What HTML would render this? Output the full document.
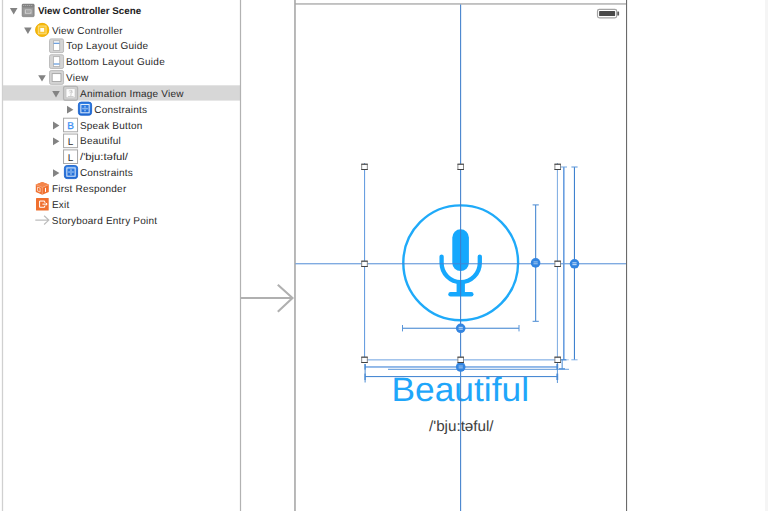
<!DOCTYPE html>
<html><head><meta charset="utf-8">
<title>Main.storyboard</title>
<style>
html,body{margin:0;padding:0;background:#fff;}
body{width:768px;height:511px;position:relative;overflow:hidden;font-family:"Liberation Sans",sans-serif;}
.a{position:absolute;}
</style></head><body>
<svg class="a" style="left:0;top:0" width="242" height="511" viewBox="0 0 242 511" font-family="Liberation Sans, sans-serif" text-rendering="geometricPrecision">
<defs><linearGradient id="cg" x1="0" y1="0" x2="0" y2="1"><stop offset="0" stop-color="#3481e5"/><stop offset="1" stop-color="#1e69d5"/></linearGradient></defs>
<rect x="1.7" y="0" width="0.6" height="511" fill="#e6e6e6"/><rect x="2.2" y="0" width="0.9" height="511" fill="#c6c6c6"/>
<rect x="3" y="85.3" width="237" height="15.3" fill="#d7d7d7"/>
<rect x="239.9" y="0" width="1.2" height="511" fill="#b2b2b2"/>
<polygon points="9.90,8.10 17.50,8.10 13.70,14.50" fill="#838383"/>
<rect x="22.10" y="4.10" width="12.10" height="12.60" fill="#909090" rx="1" stroke="#7c7c7c" stroke-width="0.6"/>
<rect x="22.10" y="4.10" width="12.10" height="3.20" fill="#828282" rx="1"/>
<path d="M23.15 5.50 h10" stroke="#b5b5b5" stroke-width="0.9" stroke-dasharray="1.1 0.9"/>
<rect x="23.25" y="7.80" width="9.80" height="7.60" fill="#9b9b9b" />
<rect x="24.85" y="9.50" width="6.60" height="4.20" fill="#d4d4d4" />
<rect x="26.05" y="10.70" width="4.20" height="1.80" fill="#a8a8a8" stroke="#8a8a8a" stroke-width="0.4"/>
<text x="37.9" y="14" font-size="9.8" font-weight="bold" fill="#1d1d1d">View Controller Scene</text>
<polygon points="24.10,27.60 31.70,27.60 27.90,34.00" fill="#838383"/>
<circle cx="42.2" cy="29.9" r="6.95" fill="#f6b90c"/>
<circle cx="42.2" cy="29.9" r="6.6" fill="none" stroke="#eaa800" stroke-width="0.7"/>
<rect x="38.30" y="26.00" width="7.80" height="7.80" fill="#f8c632" stroke="#fbe08a" stroke-width="0.9"/>
<rect x="40.30" y="28.00" width="3.80" height="3.80" fill="#fffdf5" />
<text x="51.9" y="34" font-size="10" letter-spacing="0.22" fill="#2a2a2a">View Controller</text>
<rect x="49.55" y="38.90" width="14.00" height="13.70" fill="#d4d4d4" rx="1.6" stroke="#bcbcbc" stroke-width="1"/>
<rect x="53.35" y="40.85" width="6.40" height="9.80" fill="#fff" stroke="#a6a6a6" stroke-width="0.7"/>
<rect x="53.65" y="42.75" width="5.80" height="1.00" fill="#3f83d6" />
<text x="66.3" y="49" font-size="10" letter-spacing="0.22" fill="#2a2a2a">Top Layout Guide</text>
<rect x="49.55" y="54.75" width="14.00" height="13.70" fill="#d4d4d4" rx="1.6" stroke="#bcbcbc" stroke-width="1"/>
<rect x="53.35" y="56.70" width="6.40" height="9.80" fill="#fff" stroke="#a6a6a6" stroke-width="0.7"/>
<rect x="53.65" y="63.50" width="5.80" height="1.00" fill="#3f83d6" />
<text x="65.9" y="65" font-size="10" letter-spacing="0.27" fill="#2a2a2a">Bottom Layout Guide</text>
<polygon points="38.20,75.15 45.80,75.15 42.00,81.55" fill="#838383"/>
<rect x="49.55" y="70.60" width="14.00" height="13.70" fill="#d4d4d4" rx="1.6" stroke="#bcbcbc" stroke-width="1"/>
<rect x="52.15" y="73.65" width="8.80" height="7.80" fill="#fff" stroke="#9c9c9c" stroke-width="0.8"/>
<text x="66.1" y="81" font-size="10" letter-spacing="0.22" fill="#2a2a2a">View</text>
<polygon points="52.20,91.00 59.80,91.00 56.00,97.40" fill="#838383"/>
<rect x="63.55" y="86.45" width="14.00" height="13.70" fill="#d4d4d4" rx="1.6" stroke="#bcbcbc" stroke-width="1"/>
<rect x="63.55" y="86.45" width="14.00" height="13.70" fill="#cfcfcf" rx="1.6" stroke="#b4b4b4" stroke-width="1.2"/>
<rect x="66.05" y="88.80" width="9.00" height="9.00" fill="#fcfcfc" stroke="#bdbdbd" stroke-width="0.6"/>
<path d="M71.55 90.30 l-0.8 6 M68.75 91.10 q2 -1.5 3.8 0 M69.55 92.90 q1.6 -2 3.4 -0.6 M67.95 96.50 h5.6" stroke="#c9c9c9" stroke-width="0.9" fill="none"/>
<text x="80.0" y="97" font-size="10" letter-spacing="0.22" fill="#2a2a2a">Animation Image View</text>
<polygon points="67.00,105.75 73.40,109.65 67.00,113.55" fill="#838383"/>
<rect x="78.40" y="102.10" width="13.20" height="13.10" fill="url(#cg)" rx="2.8" stroke="#1d62c8" stroke-width="0.9"/>
<rect x="80.85" y="104.50" width="8.30" height="8.30" fill="none" stroke="#e4eefb" stroke-width="1"/>
<path d="M85.00 105.75 v5.8 M82.10 108.65 h5.8" stroke="#8fbaf0" stroke-width="0.9"/>
<path d="M84.00 106.75 h2 M84.00 110.55 h2 M83.10 107.65 v2 M86.90 107.65 v2" stroke="#8fbaf0" stroke-width="0.7"/>
<text x="94.3" y="113" font-size="10" letter-spacing="0.22" fill="#2a2a2a">Constraints</text>
<polygon points="53.00,121.60 59.40,125.50 53.00,129.40" fill="#838383"/>
<rect x="63.55" y="118.20" width="14.00" height="13.60" fill="#fff" stroke="#a8a8a8" stroke-width="1"/>
<text x="70.65" y="129" text-anchor="middle" font-size="10" fill="#3b8ff5" stroke="#3b8ff5" stroke-width="0.3">B</text>
<text x="79.9" y="129" font-size="10" letter-spacing="0.22" fill="#2a2a2a">Speak Button</text>
<polygon points="53.00,137.45 59.40,141.35 53.00,145.25" fill="#838383"/>
<rect x="63.55" y="134.05" width="14.00" height="13.60" fill="#fff" stroke="#a8a8a8" stroke-width="1"/>
<text x="70.65" y="145" text-anchor="middle" font-size="10" fill="#2e2e2e" stroke="#2e2e2e" stroke-width="0">L</text>
<text x="80.0" y="144" font-size="10" letter-spacing="0.22" fill="#2a2a2a">Beautiful</text>
<rect x="63.55" y="149.90" width="14.00" height="13.60" fill="#fff" stroke="#a8a8a8" stroke-width="1"/>
<text x="70.65" y="161" text-anchor="middle" font-size="10" fill="#2e2e2e" stroke="#2e2e2e" stroke-width="0">L</text>
<text x="80.1" y="160" font-size="10" textLength="47.8" lengthAdjust="spacingAndGlyphs" fill="#2a2a2a">/'bju:təful/</text>
<polygon points="53.00,169.15 59.40,173.05 53.00,176.95" fill="#838383"/>
<rect x="64.40" y="165.50" width="13.20" height="13.10" fill="url(#cg)" rx="2.8" stroke="#1d62c8" stroke-width="0.9"/>
<rect x="66.85" y="167.90" width="8.30" height="8.30" fill="none" stroke="#e4eefb" stroke-width="1"/>
<path d="M71.00 169.15 v5.8 M68.10 172.05 h5.8" stroke="#8fbaf0" stroke-width="0.9"/>
<path d="M70.00 170.15 h2 M70.00 173.95 h2 M69.10 171.05 v2 M72.90 171.05 v2" stroke="#8fbaf0" stroke-width="0.7"/>
<text x="79.9" y="176" font-size="10" letter-spacing="0.22" fill="#2a2a2a">Constraints</text>
<g transform="translate(35.80,182.00)"><path d="M6.5 0 L13 2.6 L13 10 L6.5 12.8 L0 10 L0 2.6 Z" fill="#f0702f"/><path d="M6.5 0 L13 2.6 L6.5 5.4 L0 2.6 Z" fill="#f4854a"/><path d="M0 2.6 L6.5 5.4 L13 2.6 M6.5 5.4 L6.5 12.8" stroke="#f9b491" stroke-width="0.7" fill="none"/><rect x="1.7" y="5.6" width="2.6" height="3.8" fill="none" stroke="#fbd9c6" stroke-width="0.8" transform="skewY(22) translate(0,-1.2)"/><path d="M9.7 5.9 v4" stroke="#fff" stroke-width="1"/></g>
<text x="52.0" y="192" font-size="10" letter-spacing="0.22" fill="#2a2a2a">First Responder</text>
<g transform="translate(36.00,197.95)"><rect x="0" y="0" width="12.7" height="12.6" rx="0.6" fill="#f0702f"/><path d="M8.6 4.6 V3.1 H3.6 V9.3 H8.6 V7.8" stroke="#fff" stroke-width="1" fill="none"/><path d="M6.4 6.2 H11 M9.6 4.7 L11.2 6.2 L9.6 7.7" stroke="#fff" stroke-width="1" fill="none"/></g>
<text x="51.9" y="208" font-size="10" letter-spacing="0.22" fill="#2a2a2a">Exit</text>
<path d="M35.30 220.10 H48.50 M44.10 215.70 L48.80 220.10 L44.10 224.50" stroke="#bdbdbd" stroke-width="1.2" fill="none"/>
<text x="51.8" y="224" font-size="10" letter-spacing="0.22" fill="#2a2a2a">Storyboard Entry Point</text>
</svg>
<svg class="a" style="left:0;top:0" width="768" height="511" viewBox="0 0 768 511">
<!-- device frame -->
<rect x="294.25" y="0" width="1.45" height="511" fill="#9e9e9e"/>
<rect x="626" y="0" width="1.1" height="511" fill="#6a6a6a"/>
<rect x="295" y="3.3" width="331" height="1.3" fill="#a6a6a6"/>
<rect x="765" y="0" width="3" height="511" fill="#f5f5f5"/>
<!-- battery -->
<rect x="597.5" y="9.4" width="19.2" height="8.4" rx="1.8" fill="#fff" stroke="#a4a4a4" stroke-width="1.2"/>
<rect x="599.1" y="11.1" width="16" height="5" rx="0.6" fill="#4a4a4a"/>
<rect x="617.3" y="11.6" width="1.8" height="3.9" rx="0.5" fill="#5a5a5a"/>
<!-- entry arrow -->
<path d="M240.5 298 H292.5 M277.8 284.8 L292.5 298 L277.8 311.8" stroke="#b0b0b0" stroke-width="2.1" fill="none"/>
<!-- mic image -->
<circle cx="460.7" cy="262.8" r="57.4" fill="none" stroke="#1faaf9" stroke-width="2.4"/>
<rect x="452.3" y="229.2" width="16.6" height="41.9" rx="8.3" fill="#16a8fd"/>
<path d="M441.6 256.6 V263.0 A19.1 19.1 0 0 0 479.8 263.0 V256.6" fill="none" stroke="#16a8fd" stroke-width="4.3" stroke-linecap="round"/>
<rect x="456.6" y="281.5" width="8.3" height="12" fill="#16a8fd"/>
<rect x="448.3" y="292" width="25.2" height="4.4" rx="2.2" fill="#16a8fd"/>

<!-- labels -->
<g text-rendering="geometricPrecision" font-family="Liberation Sans, sans-serif">
<text x="391.5" y="401.3" font-size="33.8" textLength="137.5" lengthAdjust="spacingAndGlyphs" fill="#1fa6fa">Beautiful</text>
<text x="429" y="430.6" font-size="14.8" textLength="64.6" lengthAdjust="spacingAndGlyphs" fill="#3e3e3e">/'bju:təful/</text>
</g>
<!-- center guide lines -->
<rect x="460.0" y="4.5" width="1.15" height="507" fill="#3c7ccb" fill-opacity="0.9"/>
<rect x="295.5" y="263.2" width="330.5" height="1.1" fill="#4585d2" fill-opacity="0.85"/>
<!-- selection frame lines -->
<rect x="364.0" y="163" width="1.1" height="197" fill="#699fe0"/>
<rect x="556.9" y="163" width="1" height="197" fill="#7aaae2"/>
<rect x="364.5" y="359" width="193" height="1.6" fill="#a3c4ec"/>
<!-- right constraints -->
<rect x="563" y="167" width="1.6" height="193" fill="#6a9fe0"/>
<rect x="561" y="166.5" width="6" height="1" fill="#74a7e2"/>
<rect x="573.9" y="167" width="1.1" height="193" fill="#3f82cf"/>
<rect x="571.4" y="166.5" width="6.2" height="1" fill="#5a96d9"/>
<rect x="571.3" y="359.3" width="6.3" height="1" fill="#86b2e7"/>
<rect x="535.1" y="205" width="1.1" height="116" fill="#4a8ad3"/>
<rect x="532.6" y="204.4" width="6.2" height="1" fill="#4a8ad3"/>
<rect x="532.6" y="320.8" width="6.2" height="1" fill="#4a8ad3"/>
<rect x="561" y="359.1" width="5.6" height="1.4" fill="#4d8dd6"/>
<rect x="566.6" y="359.3" width="2.2" height="1" fill="#a9c8ee"/>
<rect x="561.6" y="360" width="1.1" height="9.3" fill="#5a96d9"/>
<rect x="559" y="368.2" width="6" height="1.6" fill="#4d8dd6"/>
<rect x="557" y="368.8" width="12" height="1" fill="#6fa3e0"/>
<!-- mic width constraint -->
<rect x="402.5" y="327.7" width="116.5" height="1.1" fill="#4a8ad3"/>
<rect x="402" y="325" width="1" height="6.4" fill="#5a96d9"/>
<rect x="518.5" y="325" width="1" height="6.4" fill="#5a96d9"/>
<!-- bottom constraints -->
<rect x="365" y="366" width="192" height="1.9" fill="#8fb7e8"/>
<rect x="388" y="368.8" width="169" height="1" fill="#5a96d9"/>
<rect x="365" y="376" width="192" height="1.1" fill="#4a8ad3"/>
<rect x="364.6" y="364" width="1" height="18.5" fill="#4a8ad3"/>
<rect x="364.2" y="364" width="1.8" height="5.6" fill="#4a8ad3" opacity="0.7"/>
<rect x="364.2" y="373.6" width="1.8" height="6.4" fill="#4a8ad3" opacity="0.7"/>
<rect x="556.9" y="363" width="1" height="20" fill="#5f98da"/>
<rect x="556.4" y="364" width="1.8" height="5.6" fill="#4a8ad3"/>
<rect x="556.4" y="373.6" width="1.8" height="6.4" fill="#4a8ad3"/>
<!-- badges -->
<circle cx="535.6" cy="262.9" r="4.8" fill="#3385e1"/><rect x="533.50" y="261.45" width="4.2" height="0.95" fill="#a9cbf0"/><rect x="533.50" y="263.30" width="4.2" height="0.95" fill="#a9cbf0"/>
<circle cx="574.5" cy="263.8" r="4.8" fill="#3385e1"/><rect x="572.40" y="262.35" width="4.2" height="0.95" fill="#d6e6f8"/><rect x="572.40" y="264.20" width="4.2" height="0.95" fill="#d6e6f8"/>
<circle cx="460.7" cy="328.3" r="4.8" fill="#3385e1"/><rect x="458.60" y="326.85" width="4.2" height="0.95" fill="#d0e2f6"/><rect x="458.60" y="328.70" width="4.2" height="0.95" fill="#d0e2f6"/>
<circle cx="460.7" cy="367.0" r="4.8" fill="#3385e1"/><rect x="458.60" y="365.55" width="4.2" height="0.95" fill="#a9cbf0"/><rect x="458.60" y="367.40" width="4.2" height="0.95" fill="#a9cbf0"/>
<!-- handles -->
<rect x="361.7" y="164.2" width="5.6" height="5.3" fill="#fdfeff" stroke="#7c7c7c" stroke-width="0.9"/>
<rect x="361.25" y="163.75" width="6.5" height="0.9" fill="#3c3c3c"/>
<rect x="361.25" y="169.05" width="6.5" height="0.9" fill="#3c3c3c"/>
<rect x="361.7" y="261.15" width="5.6" height="5.3" fill="#fdfeff" stroke="#7c7c7c" stroke-width="0.9"/>
<rect x="361.25" y="260.70" width="6.5" height="0.9" fill="#3c3c3c"/>
<rect x="361.25" y="266.00" width="6.5" height="0.9" fill="#3c3c3c"/>
<rect x="361.7" y="357.15" width="5.6" height="5.3" fill="#fdfeff" stroke="#7c7c7c" stroke-width="0.9"/>
<rect x="361.25" y="356.70" width="6.5" height="0.9" fill="#3c3c3c"/>
<rect x="361.25" y="362.00" width="6.5" height="0.9" fill="#3c3c3c"/>
<rect x="457.9" y="164.2" width="5.6" height="5.3" fill="#fdfeff" stroke="#7c7c7c" stroke-width="0.9"/>
<rect x="457.45" y="163.75" width="6.5" height="0.9" fill="#3c3c3c"/>
<rect x="457.45" y="169.05" width="6.5" height="0.9" fill="#3c3c3c"/>
<rect x="457.9" y="357.15" width="5.6" height="5.3" fill="#fdfeff" stroke="#7c7c7c" stroke-width="0.9"/>
<rect x="457.45" y="356.70" width="6.5" height="0.9" fill="#3c3c3c"/>
<rect x="457.45" y="362.00" width="6.5" height="0.9" fill="#3c3c3c"/>
<rect x="554.9" y="164.2" width="5.6" height="5.3" fill="#fdfeff" stroke="#7c7c7c" stroke-width="0.9"/>
<rect x="554.45" y="163.75" width="6.5" height="0.9" fill="#3c3c3c"/>
<rect x="554.45" y="169.05" width="6.5" height="0.9" fill="#3c3c3c"/>
<rect x="554.9" y="261.15" width="5.6" height="5.3" fill="#fdfeff" stroke="#7c7c7c" stroke-width="0.9"/>
<rect x="554.45" y="260.70" width="6.5" height="0.9" fill="#3c3c3c"/>
<rect x="554.45" y="266.00" width="6.5" height="0.9" fill="#3c3c3c"/>
<rect x="554.9" y="357.15" width="5.6" height="5.3" fill="#fdfeff" stroke="#7c7c7c" stroke-width="0.9"/>
<rect x="554.45" y="356.70" width="6.5" height="0.9" fill="#3c3c3c"/>
<rect x="554.45" y="362.00" width="6.5" height="0.9" fill="#3c3c3c"/>
</svg>

</body></html>
